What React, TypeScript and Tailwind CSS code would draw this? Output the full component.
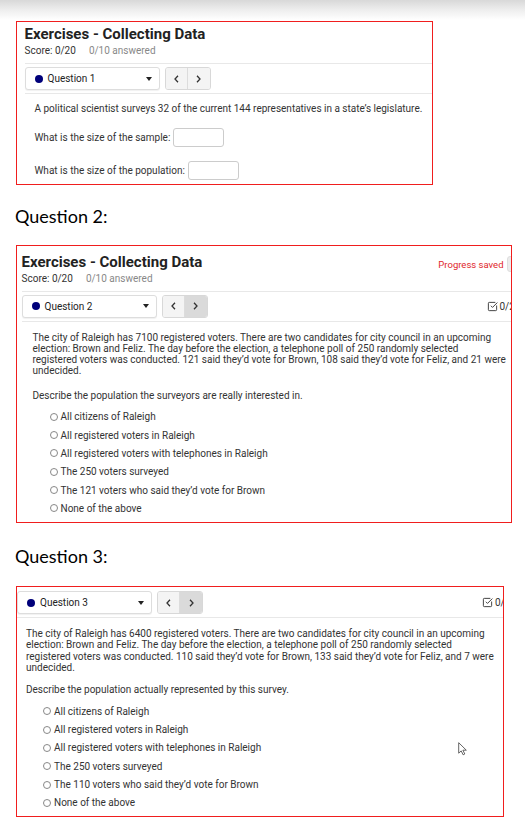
import React from "react";
import { SquareCheckBig } from "lucide-react";

const q2Lines = [
  "The city of Raleigh has 7100 registered voters. There are two candidates for city council in an upcoming",
  "election: Brown and Feliz. The day before the election, a telephone poll of 250 randomly selected",
  "registered voters was conducted. 121 said they\u2019d vote for Brown, 108 said they\u2019d vote for Feliz, and 21 were",
  "undecided.",
];

const q3Lines = [
  "The city of Raleigh has 6400 registered voters. There are two candidates for city council in an upcoming",
  "election: Brown and Feliz. The day before the election, a telephone poll of 250 randomly selected",
  "registered voters was conducted. 110 said they\u2019d vote for Brown, 133 said they\u2019d vote for Feliz, and 7 were",
  "undecided.",
];

const q2Options = [
  "All citizens of Raleigh",
  "All registered voters in Raleigh",
  "All registered voters with telephones in Raleigh",
  "The 250 voters surveyed",
  "The 121 voters who said they\u2019d vote for Brown",
  "None of the above",
];

const q3Options = [
  "All citizens of Raleigh",
  "All registered voters in Raleigh",
  "All registered voters with telephones in Raleigh",
  "The 250 voters surveyed",
  "The 110 voters who said they\u2019d vote for Brown",
  "None of the above",
];

function Header({ saved }: { saved?: boolean }) {
  return (
    <div className="flex">
      <div>
        <div className="h-[18px] text-[15px] leading-[18px] font-bold text-[#222]">
          Exercises - Collecting Data
        </div>
        <div className="h-[14px] text-[10px] leading-[15px] text-[#333]">
          Score: 0/20
          <span className="ml-[13px] text-[#888]">0/10 answered</span>
        </div>
      </div>
      {saved && (
        <div className="ml-auto flex items-start pt-[5px] gap-[3px]">
          <span className="text-[9.5px] leading-[14px] text-[#e0262b]">Progress saved</span>
          <span className="w-[28px] h-[16px] -mt-[2px] rounded-[3px] bg-[#ececec] border border-[#dedede]" />
        </div>
      )}
    </div>
  );
}

function Toolbar({
  n,
  hover,
  top = true,
  pts = true,
}: {
  n: number;
  hover?: boolean;
  top?: boolean;
  pts?: boolean;
}) {
  return (
    <div
      className={
        "flex items-center pt-[3px] pb-[3px] border-b border-[#e8e8e8] " +
        (top ? "mt-[6px] border-t" : "")
      }
    >
      <div className="w-[135px] h-[23px] flex items-center pl-[9px] pr-[7px] bg-white border border-[#dddddd] rounded-[3px] shadow-[0_1px_1px_rgba(0,0,0,0.06)]">
        <span className="w-[8px] h-[8px] rounded-full bg-[#00007a]" />
        <span className="ml-[5px] text-[10px] text-[#222]">Question {n}</span>
        <svg className="ml-auto" width="6" height="4" viewBox="0 0 6 4">
          <path d="M0 0 L6 0 L3 4 Z" fill="#222" />
        </svg>
      </div>
      <div className="ml-[5px] flex w-[46px] h-[23px] border border-[#d8d8d8] rounded-[3px] overflow-hidden">
        <div className="w-1/2 flex items-center justify-center bg-[#f4f4f4] border-r border-[#dcdcdc]">
          <svg width="5" height="8" viewBox="0 0 5 8">
            <path d="M4 0.8 L1 4 L4 7.2" fill="none" stroke="#333" strokeWidth="1.3" />
          </svg>
        </div>
        <div
          className={
            "w-1/2 flex items-center justify-center " + (hover ? "bg-[#dadada]" : "bg-[#f4f4f4]")
          }
        >
          <svg width="5" height="8" viewBox="0 0 5 8">
            <path d="M1 0.8 L4 4 L1 7.2" fill="none" stroke="#333" strokeWidth="1.3" />
          </svg>
        </div>
      </div>
      {pts && (
        <div className="ml-auto w-[48px] flex items-center gap-[2px] text-[10px] text-[#333]">
          <SquareCheckBig size={11} strokeWidth={2} color="#333" />
          <span>0/2 pts</span>
        </div>
      )}
    </div>
  );
}

function Paragraph({ lines }: { lines: string[] }) {
  return (
    <div className="text-[10px] leading-[11.3px] text-[#333]">
      {lines.map((l, i) => (
        <div key={i}>{l}</div>
      ))}
    </div>
  );
}

function Options({ items }: { items: string[] }) {
  return (
    <div className="mt-[7px] pl-[17px]">
      {items.map((o) => (
        <div key={o} className="h-[18.3px] flex items-center text-[10px] text-[#333]">
          <span className="w-[8px] h-[8px] rounded-full border border-[#888] bg-white" />
          <span className="ml-[3px]">{o}</span>
        </div>
      ))}
    </div>
  );
}

function InputRow({ label, first }: { label: string; first?: boolean }) {
  return (
    <div className={"flex items-center " + (first ? "mt-[13px]" : "mt-[14px]")}>
      <span className="text-[10px] text-[#333]">{label}</span>
      <span className="ml-[3px] w-[51px] h-[19px] bg-white border border-[#cccccc] rounded-[3px]" />
    </div>
  );
}

function Cursor() {
  return (
    <svg className="absolute left-[441px] top-[155px]" width="10" height="14" viewBox="0 0 10 14">
      <path
        d="M0.7 0.7 L0.7 11.2 L3.2 8.9 L5.1 12.8 L6.8 12 L4.9 8.2 L8.3 8.2 Z"
        fill="#fff"
        stroke="#555"
        strokeWidth="0.9"
        strokeLinejoin="round"
      />
    </svg>
  );
}

export default function App() {
  return (
    <div className="w-[525px] h-[828px] bg-white overflow-hidden font-['Roboto',sans-serif]">
      <div className="h-[20px] bg-gradient-to-b from-[#d8d8d8] via-[#eeeeee] to-white" />

      {/* question 1 */}
      <div className="mt-[1px] ml-[16px] w-[417px] h-[164px] border-[1.5px] border-[#f01e1e] overflow-hidden">
        <div className="w-[511px] pl-[7.5px] pt-[3px]">
          <Header />
          <Toolbar n={1} pts={false} />
          <div className="pl-[10px] pt-[9px]">
            <div className="text-[10px] leading-[12px] text-[#333]">
              A political scientist surveys 32 of the current 144 representatives in a state&rsquo;s legislature.
            </div>
            <InputRow label="What is the size of the sample:" first />
            <InputRow label="What is the size of the population:" />
          </div>
        </div>
      </div>

      <div className="mt-[19px] pl-[15px] h-[24px] text-[18px] leading-[24px] text-black font-['Lato',sans-serif]">
        Question 2:
      </div>

      {/* question 2 */}
      <div className="mt-[17px] ml-[16px] w-[496px] h-[278px] border-[1.5px] border-[#f01e1e] overflow-hidden">
        <div className="w-[517.5px] pl-[4.5px] pt-[6.5px]">
          <Header saved />
          <Toolbar n={2} hover />
          <div className="pl-[11px] pt-[10px]">
            <Paragraph lines={q2Lines} />
            <div className="mt-[13px] text-[10px] leading-[11px] text-[#333]">
              Describe the population the surveyors are really interested in.
            </div>
            <Options items={q2Options} />
          </div>
        </div>
      </div>

      <div className="mt-[21px] pl-[15px] h-[24px] text-[18px] leading-[24px] text-black font-['Lato',sans-serif]">
        Question 3:
      </div>

      {/* question 3 */}
      <div className="relative mt-[18px] ml-[16px] w-[488px] h-[231px] border-[1.5px] border-[#f01e1e] overflow-hidden">
        <div className="w-[513px] pt-[1px]">
          <Toolbar n={3} hover top={false} />
          <div className="pl-[9px] pt-[10px]">
            <Paragraph lines={q3Lines} />
            <div className="mt-[11px] text-[10px] leading-[11px] text-[#333]">
              Describe the population actually represented by this survey.
            </div>
            <Options items={q3Options} />
          </div>
        </div>
        <Cursor />
      </div>
    </div>
  );
}
